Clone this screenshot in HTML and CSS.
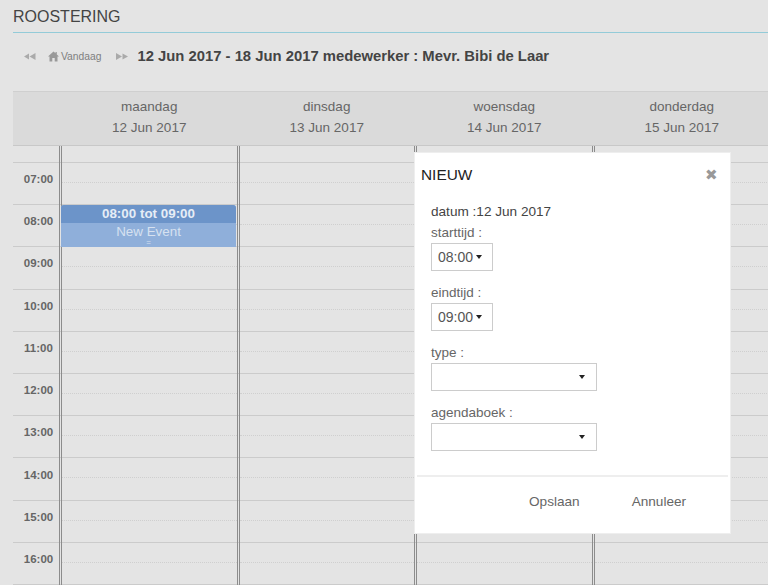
FILE: index.html
```html
<!DOCTYPE html>
<html lang="nl">
<head>
<meta charset="utf-8">
<title>Roostering</title>
<link rel="stylesheet" href="styles.css">
</head>
<body>
<main class="page">
  <h1 class="title">ROOSTERING</h1>
  <nav class="nav">
    <svg class="arrow" width="13" height="7" viewBox="0 0 13 7"><path d="M0 3.500 5 0.500V6.500Z M5.500 3.500 11.500 0V7Z"/></svg>
    <span class="today">
      <svg class="home" width="11" height="11" viewBox="0 0 11 11"><path d="M5.500 0.500 0 5.500H1.500V10.500H4.300V7H6.700V10.500H9.500V5.500H11L8.800 3.500V1H7.500V2.300Z"/></svg>
      <span>Vandaag</span>
    </span>
    <svg class="arrow next" width="12" height="7" viewBox="0 0 12 7"><path d="M0 0 6 3.500 0 7Z M6.500 0.500 12 3.500 6.500 6.500Z"/></svg>
    <strong class="range">12 Jun 2017 - 18 Jun 2017 medewerker : Mevr. Bibi de Laar</strong>
  </nav>
  <div class="calendar">
    <div class="head">
      <div class="head-spacer"></div>
      <div class="head-day">maandag<br>12 Jun 2017</div>
      <div class="head-day">dinsdag<br>13 Jun 2017</div>
      <div class="head-day">woensdag<br>14 Jun 2017</div>
      <div class="head-day">donderdag<br>15 Jun 2017</div>
    </div>
    <div class="body">
      <div class="times">
        <div class="lead"></div>
        <div class="time">07:00</div><div class="time">08:00</div><div class="time">09:00</div>
        <div class="time">10:00</div><div class="time">11:00</div><div class="time">12:00</div>
        <div class="time">13:00</div><div class="time">14:00</div><div class="time">15:00</div>
        <div class="time">16:00</div>
      </div>
      <div class="day"><div class="slot"></div><div class="slot"></div><div class="slot"></div><div class="slot"></div><div class="slot"></div><div class="slot"></div><div class="slot"></div><div class="slot"></div><div class="slot"></div><div class="slot"></div></div>
      <div class="day"><div class="slot"></div><div class="slot"></div><div class="slot"></div><div class="slot"></div><div class="slot"></div><div class="slot"></div><div class="slot"></div><div class="slot"></div><div class="slot"></div><div class="slot"></div></div>
      <div class="day"><div class="slot"></div><div class="slot"></div><div class="slot"></div><div class="slot"></div><div class="slot"></div><div class="slot"></div><div class="slot"></div><div class="slot"></div><div class="slot"></div><div class="slot"></div></div>
      <div class="day"><div class="slot"></div><div class="slot"></div><div class="slot"></div><div class="slot"></div><div class="slot"></div><div class="slot"></div><div class="slot"></div><div class="slot"></div><div class="slot"></div><div class="slot"></div></div>
    </div>
  </div>
  <div class="event">
    <div class="event-head">08:00 tot 09:00</div>
    <div class="event-body">New Event<span class="grip">=</span></div>
  </div>
  <section class="modal">
    <header class="modal-head">
      <span class="modal-title">NIEUW</span>
      <span class="close">&#10006;</span>
    </header>
    <div class="form">
      <div class="date">datum :12 Jun 2017</div>
      <label class="lbl lbl-first">starttijd :</label>
      <div class="select small"><span>08:00</span><i class="caret"></i></div>
      <label class="lbl">eindtijd :</label>
      <div class="select small"><span>09:00</span><i class="caret"></i></div>
      <label class="lbl">type :</label>
      <div class="select wide"><span></span><i class="caret"></i></div>
      <label class="lbl">agendaboek :</label>
      <div class="select wide"><span></span><i class="caret"></i></div>
    </div>
    <hr class="rule">
    <footer class="actions">
      <span class="save">Opslaan</span>
      <span class="cancel">Annuleer</span>
    </footer>
  </section>
</main>
</body>
</html>
```
FILE: styles.css
```css
* { box-sizing: border-box; }
html, body { margin: 0; height: 100%; overflow: hidden; }
body {
  background: #e4e4e4;
  font-family: "Liberation Sans", Arial, sans-serif;
  color: #666;
}
.page { position: relative; height: 585px; padding-left: 13px; overflow: hidden; }
.title {
  margin: 0;
  height: 33px;
  padding-top: 8px;
  font-size: 16px;
  line-height: 18px;
  font-weight: 400;
  color: #444;
  border-bottom: 1px solid #93cbd8;
}
.nav {
  display: flex;
  align-items: center;
  height: 58px;
  padding: 0 0 12px 11px;
}
.arrow { fill: #aaa; flex: none; }
.today { display: flex; align-items: center; gap: 2px; margin-left: 11px; font-size: 10.300px; color: #808080; }
.home { fill: #999; }
.next { margin-left: 15px; }
.range { margin-left: 9px; font-size: 14.820px; color: #444; white-space: nowrap; }
.calendar { width: 770px; }
.head {
  display: grid;
  grid-template-columns: 46px repeat(4, 177.500px);
  height: 55px;
  background: #dadada;
  border-top: 1px solid #cfcfcf;
  border-bottom: 1px solid #c8c8c8;
}
.head-day {
  padding: 4px 0 0 3px;
  text-align: center;
  font-size: 13.500px;
  line-height: 21px;
  color: #666;
  white-space: nowrap;
}
.body {
  display: grid;
  grid-template-columns: 46px repeat(4, 177.500px);
  height: 440px;
  background:
    repeating-linear-gradient(to bottom, #cbcbcb 0, #cbcbcb 1px, transparent 1px, transparent 42.200px) 0 16px no-repeat;
}
.lead { height: 11.500px; }
.time {
  height: 42.300px;
  display: flex;
  align-items: center;
  justify-content: center;
  padding-left: 5px;
  font-size: 11.500px;
  font-weight: 700;
  color: #666;
}
.day {
  border-left: 3px double #8c8c8c;
  padding-top: 16px;
}
.slot {
  height: 21.100px;
  margin-bottom: 21.100px;
  border-bottom: 1px dotted #cfcfcf;
}
.event {
  position: absolute;
  left: 61px;
  top: 205px;
  width: 175px;
  height: 42px;
  border-radius: 3px 3px 0 0;
  overflow: hidden;
  text-align: center;
  background: #8fafda;
}
.event-head {
  height: 18px;
  background: #6c94c9;
  color: #e6edf6;
  font-size: 13.400px;
  font-weight: 700;
  line-height: 18px;
}
.event-body {
  position: relative;
  color: #d6e1f0;
  font-size: 13.400px;
  line-height: 17px;
}
.grip { position: absolute; left: 0; right: 0; top: 16px; font-size: 8px; line-height: 8px; }
.modal {
  position: absolute;
  left: 414px;
  top: 152px;
  width: 317px;
  height: 382px;
  background: #fff;
  border: 1px solid #eee;
  display: flex;
  flex-direction: column;
}
.modal-head {
  display: flex;
  justify-content: space-between;
  align-items: center;
  height: 44px;
  padding: 0 12px 0 6px;
}
.modal-title { font-size: 15.400px; color: #222; }
.close { font-size: 15px; color: #999; }
.form { padding: 6px 0 0 16px; display: flex; flex-direction: column; align-items: flex-start; }
.date { font-size: 13.600px; line-height: 18px; color: #444; }
.lbl { margin-top: 13px; font-size: 13.500px; line-height: 18px; height: 18px; color: #666; }
.lbl-first { margin-top: 3px; }
.select {
  display: flex;
  align-items: center;
  justify-content: space-between;
  margin-top: 1px;
  padding: 0 12px 0 6px;
  height: 28px;
  border: 1px solid #ccc;
  font-size: 14px;
  color: #555;
}
.small { width: 62px; padding-right: 10px; }
.wide { width: 166px; padding-right: 11px; }
.caret {
  width: 0;
  height: 0;
  border-left: 3.500px solid transparent;
  border-right: 3.500px solid transparent;
  border-top: 4px solid #222;
}
.rule {
  margin: 24px 2px 0;
  height: 2px;
  border: 0;
  background: #eee;
}
.actions {
  display: flex;
  align-items: center;
  height: 48px;
  padding-left: 114px;
  font-size: 13.600px;
  color: #666;
}
.cancel { margin-left: 52px; }
```
